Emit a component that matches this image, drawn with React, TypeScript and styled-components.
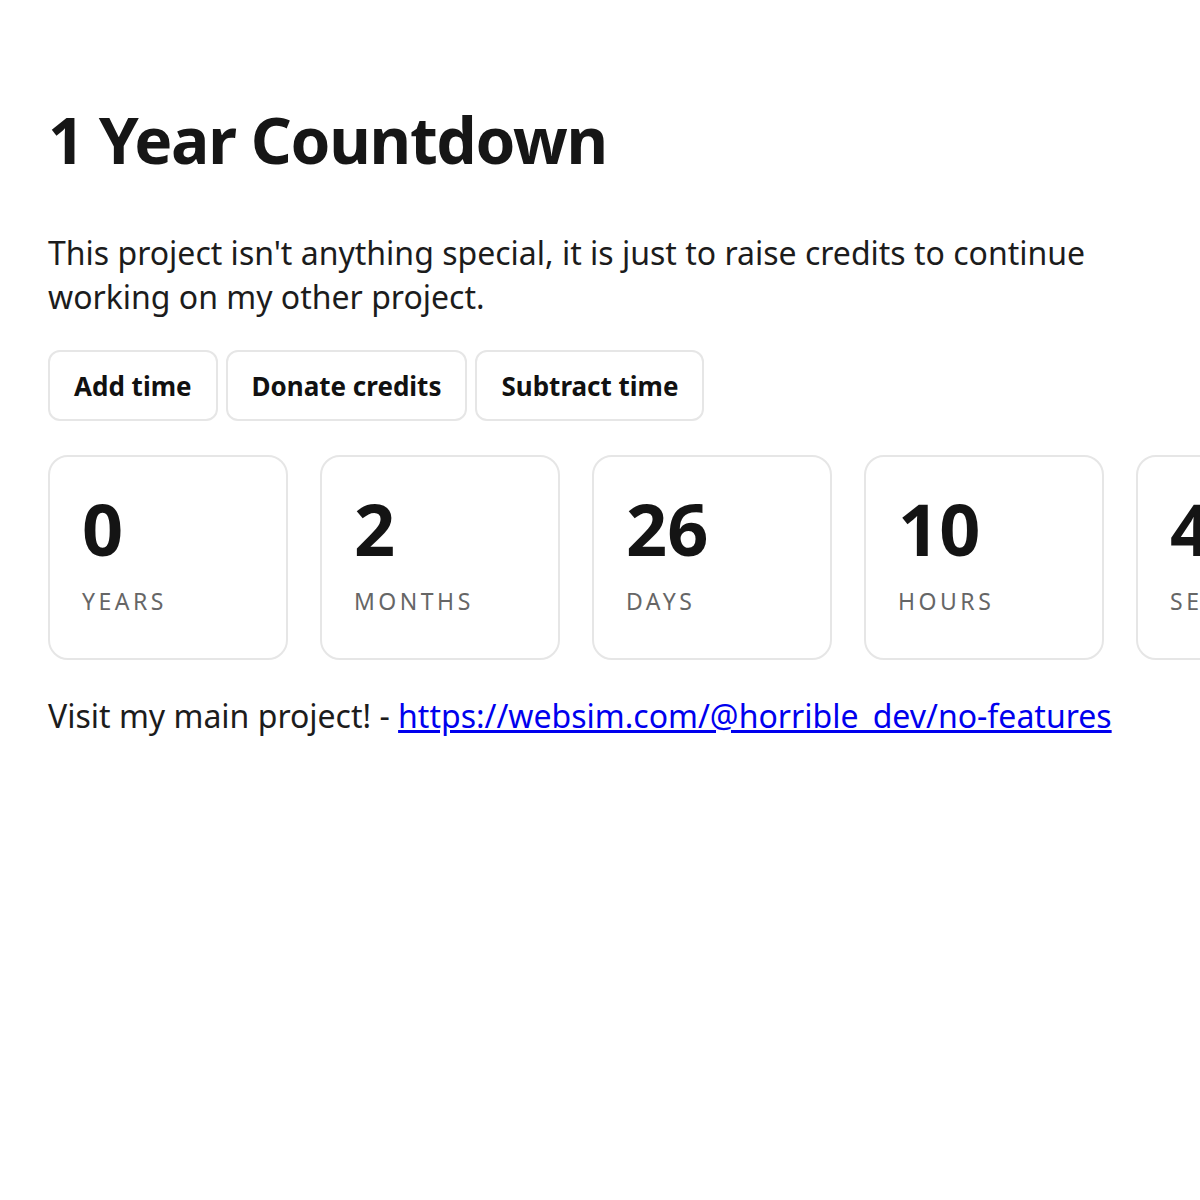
import styled, { createGlobalStyle } from 'styled-components';

const GlobalStyle = createGlobalStyle`
  html, body {
    margin: 0;
    padding: 0;
    background: #ffffff;
    overflow-x: hidden;
  }
  body {
    font-family: "Noto Sans", "Open Sans", sans-serif;
    color: #1a1a1a;
  }
`;

const units = [
  { value: 0, label: 'Years' },
  { value: 2, label: 'Months' },
  { value: 26, label: 'Days' },
  { value: 10, label: 'Hours' },
  { value: 4, label: 'Seconds' },
];

const App = () => {
  return (
    <Page>
      <GlobalStyle />
      <Title>1 Year Countdown</Title>
      <Intro>
        This project isn't anything special, it is just to raise credits to continue
        working on my other project.
      </Intro>
      <Actions>
        <ActionButton>Add time</ActionButton>
        <ActionButton>Donate credits</ActionButton>
        <ActionButton>Subtract time</ActionButton>
      </Actions>
      <Timer>
        {units.map((u) => (
          <UnitCard key={u.label}>
            <UnitValue>{u.value}</UnitValue>
            <UnitLabel>{u.label}</UnitLabel>
          </UnitCard>
        ))}
      </Timer>
      <Footer>
        Visit my main project! -{' '}
        <a href="#">https://websim.com/@horrible_dev/no-features</a>
      </Footer>
    </Page>
  );
};

export default App;

const Page = styled.main`
  padding: 48px;
`;

const Title = styled.h1`
  font-size: 64px;
  font-weight: 700;
  line-height: 1.2;
  letter-spacing: -1.3px;
  margin: 54px 0 52px;
  color: #161616;
`;

const Intro = styled.p`
  font-size: 32px;
  line-height: 44px;
  margin: 0 0 31px;
  max-width: 1100px;
  color: #1c1c1c;
`;

const Actions = styled.div`
  display: flex;
  gap: 8px;
  margin-bottom: 34px;
`;

const ActionButton = styled.button`
  font-family: inherit;
  font-size: 26px;
  font-weight: 700;
  line-height: 34px;
  color: #111;
  background: #fff;
  border: 2px solid #e6e6e6;
  border-radius: 12px;
  padding: 17px 24px 16px;
  cursor: pointer;
`;

const Timer = styled.div`
  display: flex;
  gap: 32px;
  margin-bottom: 34px;
`;

const UnitCard = styled.div`
  flex: 0 0 240px;
  box-sizing: border-box;
  height: 205px;
  padding: 32px;
  border: 2px solid #e6e6e6;
  border-radius: 20px;
`;

const UnitValue = styled.div`
  font-size: 72px;
  font-weight: 700;
  line-height: 1.1;
  color: #141414;
`;

const UnitLabel = styled.div`
  margin-top: 17px;
  font-size: 23px;
  letter-spacing: 3.5px;
  text-transform: uppercase;
  color: #666;
`;

const Footer = styled.p`
  font-size: 32px;
  line-height: 44px;
  margin: 0;
  color: #1c1c1c;

  a {
    color: #0000ee;
  }
`;
